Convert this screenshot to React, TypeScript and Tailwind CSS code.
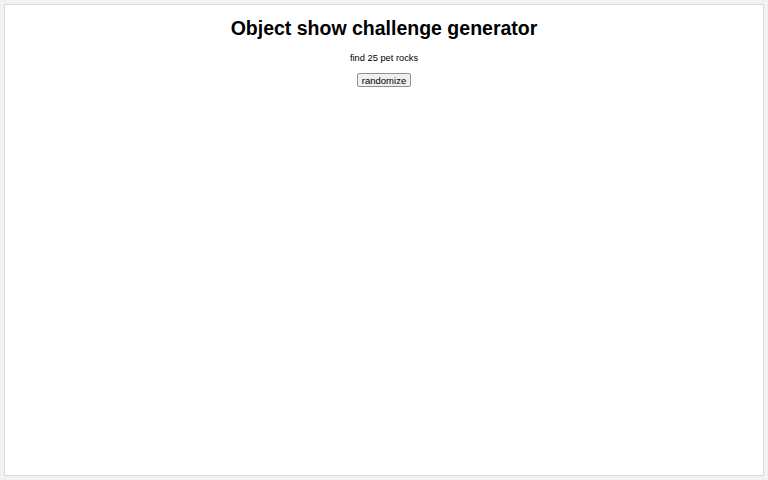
import { useState } from "react";

const challenges = [
  "find 25 pet rocks",
  "build a tower out of spoons",
  "draw your favorite object",
  "make a rock out of paper",
];

export default function App() {
  const [challenge, setChallenge] = useState(challenges[0]);

  const randomize = () => {
    setChallenge(challenges[Math.floor(Math.random() * challenges.length)]);
  };

  return (
    <div className="h-[480px] bg-[#f2f2f2] p-1 font-['Liberation_Sans',Arial,sans-serif] text-black">
      <div className="flex h-full flex-col items-center border border-[#dcdcdc] bg-white pt-[12px]">
        <h1 className="text-[19.5px] leading-[22px] font-bold">Object show challenge generator</h1>
        <p className="mt-[14px] text-[9.3px] leading-[11px]">{challenge}</p>
        <button
          onClick={randomize}
          className="mt-[9px] h-[14px] rounded-[2px] border border-[#8f8f8f] bg-[#f0f0f0] px-[4px] text-[9.5px] leading-[11px]"
        >
          randomize
        </button>
      </div>
    </div>
  );
}
